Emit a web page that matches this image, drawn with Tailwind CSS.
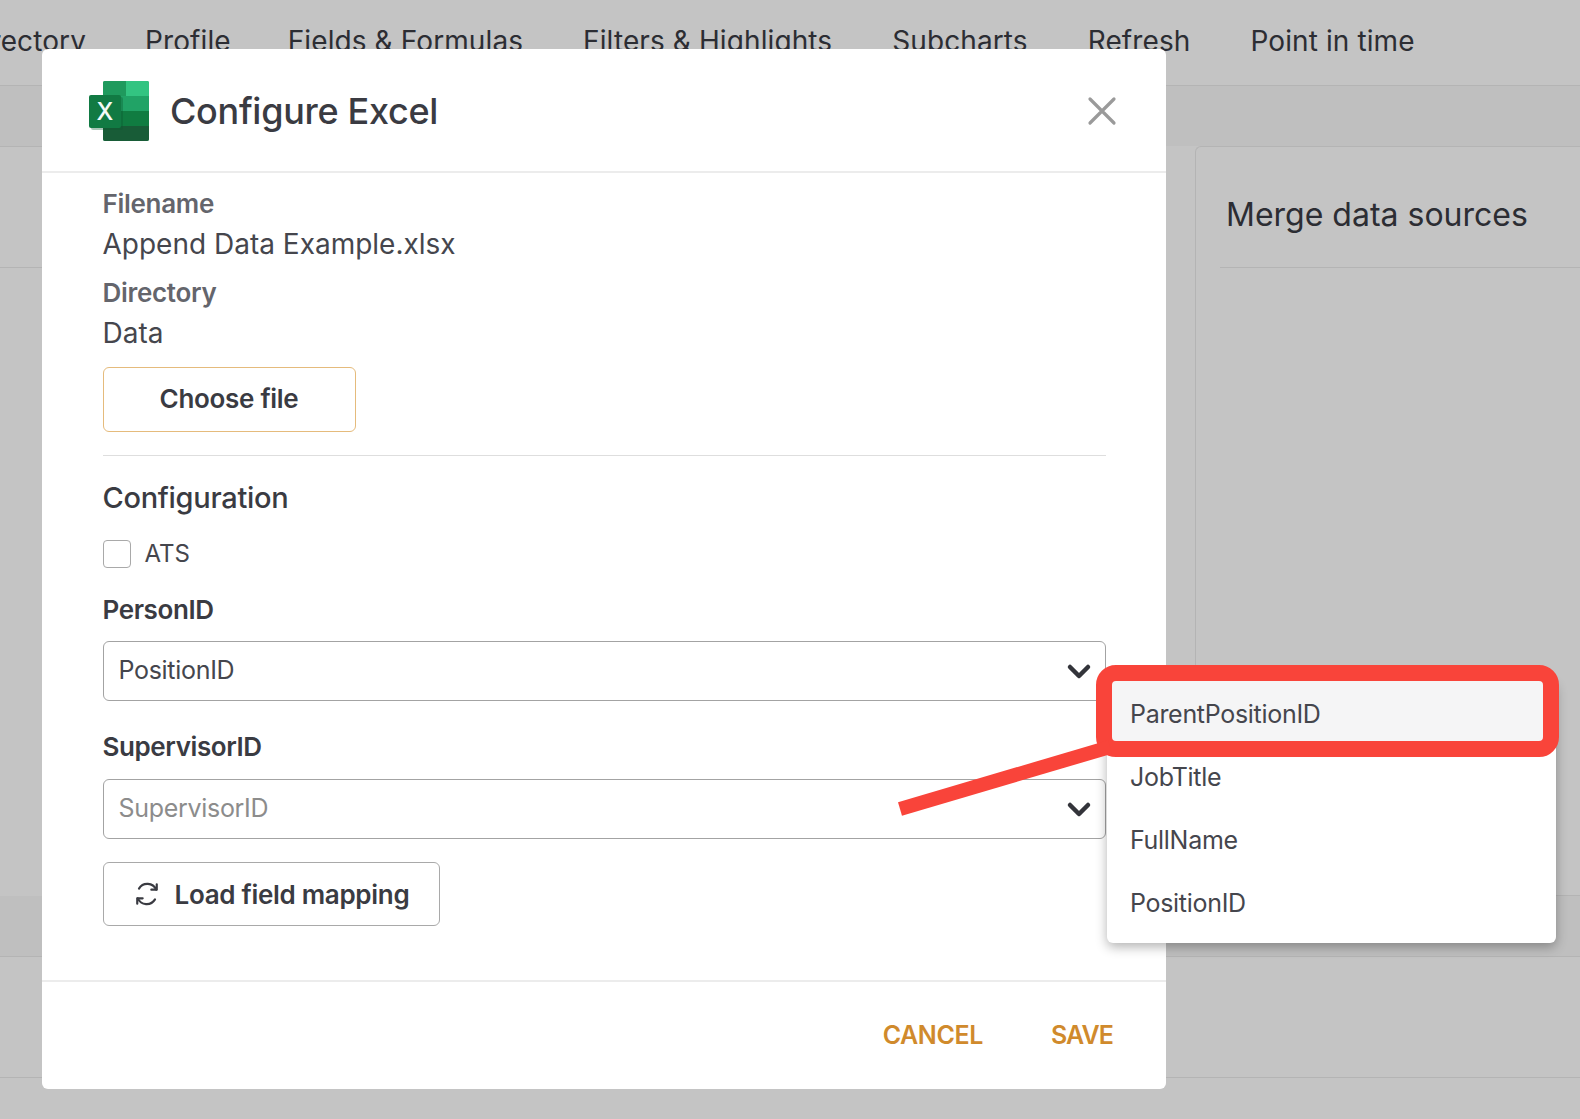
<!DOCTYPE html>
<html lang="en">
<head>
    <meta charset="UTF-8">
    <title>Configure Excel</title>
    <script src="https://cdn.jsdelivr.net/npm/@tailwindcss/browser@4"></script>
</head>
<body class="bg-[#c4c4c4] font-['Inter',sans-serif] text-[#3a3b42] overflow-hidden">
    <div class="relative w-[1580px] h-[1119px] overflow-hidden">
        <!-- page behind the overlay -->
        <div class="h-[86px] border-b border-[#b4b4b4] flex pl-[145px] pt-[23px] gap-[60px] text-[28px] leading-[36px] tracking-[0.1px] text-[#2c2d33]">
            <span class="-ml-[145px] w-[86px] overflow-hidden flex justify-end whitespace-nowrap">Directory</span>
            <span class="-ml-[1px] -mr-[3px]">Profile</span>
            <span>Fields &amp; Formulas</span>
            <span>Filters &amp; Highlights</span>
            <span>Subcharts</span>
            <span>Refresh</span>
            <span>Point in time</span>
        </div>
        <div class="h-[60px] bg-[#bfbfbf]"></div>
        <div class="flex h-[750px]">
            <div class="w-[1195px]">
                <div class="w-[42px] h-[122px] border-t border-b border-[#b4b4b4]"></div>
            </div>
            <div class="flex-1 border-t border-l border-b border-[#b4b4b4] rounded-tl-md pl-[30px] pt-[49px]">
                <div class="text-[32px] leading-[38px] text-[#2c2d33] pb-[33px]">Merge data sources</div>
                <div class="-ml-[6px] border-t border-[#b4b4b4]"></div>
            </div>
        </div>
        <div class="h-[61px] bg-[#bfbfbf] border-b border-[#b4b4b4]"></div>
        <div class="h-[121px] border-b border-[#b4b4b4]"></div>

        <!-- modal -->
        <div class="absolute left-[42px] top-[49px] w-[1124px] h-[1040px] bg-white rounded-md flex flex-col">
            <div class="h-[124px] shrink-0 pt-[2px] border-b-2 border-[#ececec] flex items-center pl-[47px] pr-[49px]">
                <svg class="w-[60px] h-[60px] shrink-0" viewBox="0 0 60 60">
                    <rect x="14" y="0" width="46" height="60" rx="2" fill="#21a366"/>
                    <path d="M14 2a2 2 0 0 1 2-2h21v15H14z" fill="#1f9a5d"/>
                    <path d="M37 0h21a2 2 0 0 1 2 2v13H37z" fill="#33c481"/>
                    <rect x="14" y="30" width="46" height="15" fill="#107c41"/>
                    <path d="M14 45h46v13a2 2 0 0 1-2 2H16a2 2 0 0 1-2-2z" fill="#185c37"/>
                    <rect x="2" y="16" width="32" height="33" rx="2" fill="#0b5a30" opacity=".35"/>
                    <rect x="0" y="14" width="32" height="33" rx="2" fill="#117a43"/>
                    <text x="16" y="39" text-anchor="middle" font-family="Inter" font-size="24" font-weight="500" fill="#f4fbf7">X</text>
                </svg>
                <h1 class="ml-[21px] text-[36px] leading-[44px] font-medium tracking-[-0.3px] text-[#3a3b42]">Configure Excel</h1>
                <button class="ml-auto">
                    <svg class="w-[30px] h-[30px]" viewBox="0 0 30 30" fill="none" stroke="#9a9a9a" stroke-width="3.200" stroke-linecap="round"><path d="M3 3l24 24M27 3L3 27"/></svg>
                </button>
            </div>

            <div class="flex-1 pl-[60.500px] pr-[60px] pt-[15px]">
                <div class="text-[26px] leading-[32px] font-semibold tracking-[-0.3px] text-[#64656c]">Filename</div>
                <div class="mt-[6px] text-[28px] leading-[36px] text-[#45464d]">Append Data Example.xlsx</div>
                <div class="mt-[15px] text-[26px] leading-[32px] font-semibold tracking-[-0.3px] text-[#64656c]">Directory</div>
                <div class="mt-[6px] text-[28px] leading-[36px] text-[#45464d]">Data</div>
                <button class="mt-[16px] block w-[253px] h-[65px] pb-[2px] border border-[#e5bb7c] rounded-md text-[26px] font-semibold tracking-[-0.3px] text-[#3a3b42]">Choose file</button>
                <div class="mt-[23px] border-t border-[#dedede]"></div>
                <h2 class="mt-[22px] text-[29px] leading-[40px] font-medium tracking-[-0.3px] text-[#3a3b42]">Configuration</h2>
                <label class="mt-[20px] flex items-center">
                    <span class="w-[28px] h-[28px] border border-[#a9a9a9] rounded-[4px]"></span>
                    <span class="ml-[14px] text-[24px] leading-[32px] text-[#45464d]">ATS</span>
                </label>
                <div class="mt-[24px] text-[26px] leading-[32px] font-semibold tracking-[-0.4px] text-[#3a3b42]">PersonID</div>
                <div class="mt-[15px] h-[60px] border border-[#a3a3a3] rounded-md flex items-center pl-[15px] pr-[13px] text-[25px] tracking-[-0.3px] text-[#45464d]">
                    PositionID
                    <svg class="ml-auto w-[26px] h-[18px]" viewBox="0 0 26 18" fill="none" stroke="#33343a" stroke-width="4.500" stroke-linecap="round" stroke-linejoin="round"><path d="M4 5l9 9 9-9"/></svg>
                </div>
                <div class="mt-[30px] text-[26px] leading-[32px] font-semibold tracking-[-0.4px] text-[#3a3b42]">SupervisorID</div>
                <div class="mt-[16px] h-[60px] border border-[#a3a3a3] rounded-md flex items-center pl-[15px] pr-[13px] text-[25px] tracking-[-0.3px] text-[#8c8c8c]">
                    SupervisorID
                    <svg class="ml-auto w-[26px] h-[18px]" viewBox="0 0 26 18" fill="none" stroke="#33343a" stroke-width="4.500" stroke-linecap="round" stroke-linejoin="round"><path d="M4 5l9 9 9-9"/></svg>
                </div>
                <button class="mt-[23px] w-[337px] h-[64px] border border-[#a9a9a9] rounded-md flex items-center pl-[30px] text-[26px] font-semibold tracking-[-0.3px] text-[#3a3b42]">
                    <svg class="w-[26px] h-[26px]" viewBox="0 0 24 24" fill="none" stroke="#3a3b42" stroke-width="2" stroke-linecap="round" stroke-linejoin="round"><path d="M21 3v5h-5M3 21v-5h5"/><path d="M20.500 8A9 9 0 0 0 4.600 7M3.500 16a9 9 0 0 0 15.900 1"/></svg>
                    <span class="ml-[15px]">Load field mapping</span>
                </button>
            </div>

            <div class="h-[109px] shrink-0 border-t-2 border-[#ececec] flex items-center justify-end pr-[53px] gap-[68px] text-[25px] font-semibold tracking-[-0.4px] text-[#d08a2c]">
                <span>CANCEL</span>
                <span class="tracking-[-0.9px]">SAVE</span>
            </div>
        </div>

        <!-- dropdown menu -->
        <ul class="absolute left-[1107px] top-[681px] w-[449px] h-[262px] bg-white rounded-md shadow-[0_4px_12px_rgba(0,0,0,0.3)] text-[25px] tracking-[-0.3px] text-[#45464d]">
            <li class="h-[63px] pt-[4px] pl-[23px] flex items-center bg-[#f5f5f6]">ParentPositionID</li>
            <li class="h-[63px] pt-[4px] pl-[23px] flex items-center">JobTitle</li>
            <li class="h-[63px] pt-[4px] pl-[23px] flex items-center">FullName</li>
            <li class="h-[63px] pt-[4px] pl-[23px] flex items-center">PositionID</li>
        </ul>

        <!-- red annotation -->
        <div class="absolute left-[1096px] top-[665px] w-[463px] h-[92px] border-[16px] border-[#f9443a] rounded-[20px] pointer-events-none"></div>
        <svg class="absolute left-[890px] top-[740px] w-[230px] h-[80px] pointer-events-none" viewBox="0 0 230 80"><path d="M10 69L220 7" stroke="#f9443a" stroke-width="14" fill="none"/></svg>
    </div>
</body>
</html>
